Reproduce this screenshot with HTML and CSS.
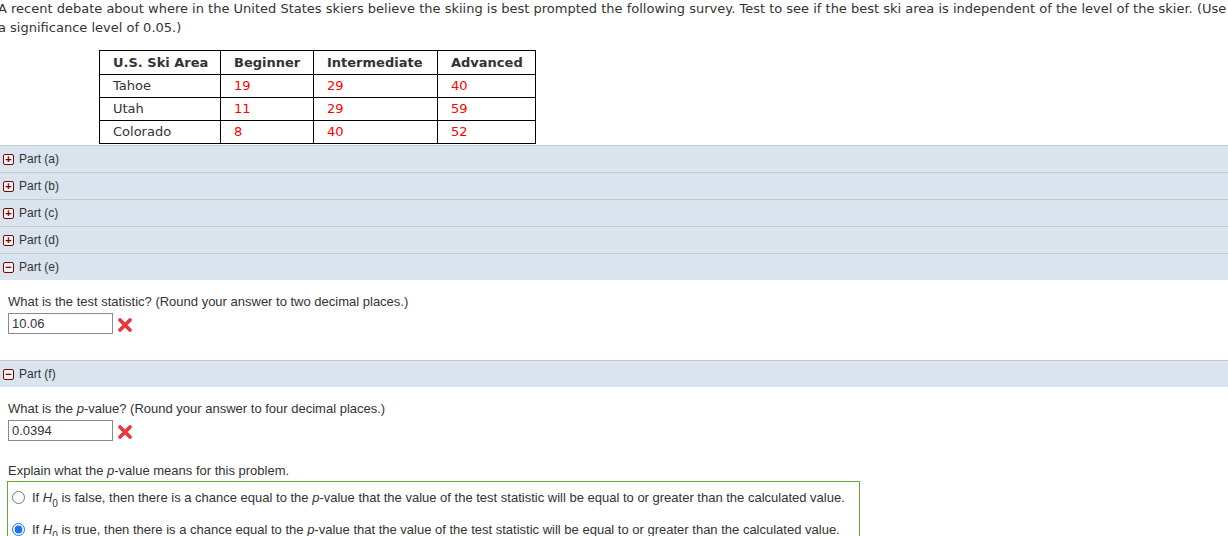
FILE: index.html
```html
<!DOCTYPE html>
<html lang="en">
<head>
    <meta charset="UTF-8">
    <title>Ski Area Survey</title>
    <link rel="stylesheet" href="styles.css">
</head>
<body>
    <div class="page">
        <p class="intro">A recent debate about where in the United States skiers believe the skiing is best prompted the following survey. Test to see if the best ski area is independent of the level of the skier. (Use a significance level of 0.05.)</p>

        <table class="survey">
            <tr>
                <th class="c1">U.S. Ski Area</th>
                <th class="c2">Beginner</th>
                <th class="c3">Intermediate</th>
                <th class="c4">Advanced</th>
            </tr>
            <tr>
                <td>Tahoe</td>
                <td class="num">19</td>
                <td class="num">29</td>
                <td class="num">40</td>
            </tr>
            <tr>
                <td>Utah</td>
                <td class="num">11</td>
                <td class="num">29</td>
                <td class="num">59</td>
            </tr>
            <tr>
                <td>Colorado</td>
                <td class="num">8</td>
                <td class="num">40</td>
                <td class="num">52</td>
            </tr>
        </table>

        <div class="part"><span class="toggle">+</span>Part (a)</div>
        <div class="part"><span class="toggle">+</span>Part (b)</div>
        <div class="part"><span class="toggle">+</span>Part (c)</div>
        <div class="part"><span class="toggle">+</span>Part (d)</div>
        <div class="part"><span class="toggle minus">&minus;</span>Part (e)</div>

        <div class="part-body">
            <p class="question">What is the test statistic? (Round your answer to two decimal places.)</p>
            <div class="answer">
                <input type="text" class="answer-input" value="10.06">
                <svg class="wrong" width="16" height="16" viewBox="0 0 16 16">
                    <path d="M3 3 L13 13 M13 3 L3 13" stroke="#e8383d" stroke-width="3.8" stroke-linecap="round"/>
                </svg>
            </div>
        </div>

        <div class="part"><span class="toggle minus">&minus;</span>Part (f)</div>

        <div class="part-body last">
            <p class="question">What is the <i>p</i>-value? (Round your answer to four decimal places.)</p>
            <div class="answer">
                <input type="text" class="answer-input" value="0.0394">
                <svg class="wrong" width="16" height="16" viewBox="0 0 16 16">
                    <path d="M3 3 L13 13 M13 3 L3 13" stroke="#e8383d" stroke-width="3.8" stroke-linecap="round"/>
                </svg>
            </div>

            <p class="explain">Explain what the <i>p</i>-value means for this problem.</p>
            <div class="choices">
                <label class="choice">
                    <input type="radio" name="pval">
                    <span>If <i>H</i><sub>0</sub> is false, then there is a chance equal to the <i>p</i>-value that the value of the test statistic will be equal to or greater than the calculated value.</span>
                </label>
                <label class="choice">
                    <input type="radio" name="pval" checked>
                    <span>If <i>H</i><sub>0</sub> is true, then there is a chance equal to the <i>p</i>-value that the value of the test statistic will be equal to or greater than the calculated value.</span>
                </label>
            </div>
        </div>
    </div>
</body>
</html>
```

FILE: styles.css
```css
/* General Reset */
* {
    margin: 0;
    padding: 0;
    box-sizing: border-box;
}

html, body {
    overflow: hidden;
}

body {
    background-color: #ffffff;
    color: #333333;
    font-family: "Liberation Sans", Arial, sans-serif;
}

.page {
    width: 1240px;
}

.intro {
    font-family: "DejaVu Sans", Verdana, sans-serif;
    font-size: 13px;
    line-height: 19px;
    width: 1232px;
    margin: -1px 0 0 -2px;
    color: #333333;
}

/* Survey table */
.survey {
    border-collapse: collapse;
    margin: 13px 0 1px 99px;
    font-family: "DejaVu Sans", Verdana, sans-serif;
    font-size: 13px;
}

.survey th,
.survey td {
    border: 1px solid #000000;
    line-height: 22px;
    padding: 0 0 0 13px;
    text-align: left;
    white-space: nowrap;
}

.survey th {
    font-weight: bold;
    line-height: 23px;
    color: #333333;
}

.survey td {
    color: #333333;
}

.survey td.num {
    color: #ff0000;
}

.c1 { width: 121px; }
.c2 { width: 93px; }
.c3 { width: 124px; }
.c4 { width: 98px; }

/* Collapsible parts */
.part {
    display: flex;
    align-items: center;
    height: 27px;
    background-color: #d9e4ee;
    border-top: 1px solid #c6c9cc;
    font-size: 12px;
    color: #333333;
    width: 1228px;
}

.toggle {
    display: inline-flex;
    align-items: center;
    justify-content: center;
    width: 11px;
    height: 11px;
    margin: 0 5px 0 3px;
    border: 1.5px solid #800000;
    border-radius: 2px;
    color: #800000;
    font-size: 11px;
    font-weight: bold;
    line-height: 1;
    background-color: #f4f4f6;
}

.part-body {
    padding: 14px 0 26px 8px;
}

.part-body.last {
    padding-bottom: 0;
}

.question {
    font-size: 13px;
    line-height: 16px;
    margin-bottom: 3px;
}

.answer {
    display: flex;
    align-items: center;
    gap: 4px;
}

.answer-input {
    width: 105px;
    height: 21px;
    border: 1px solid #8a8a8a;
    padding: 0 3px;
    font-family: "Liberation Sans", Arial, sans-serif;
    font-size: 13px;
    color: #333344;
}

.wrong {
    margin-top: 2px;
}

.explain {
    font-size: 13px;
    line-height: 16px;
    margin: 22px 0 2px;
}

.choices {
    width: 853px;
    margin-left: -1px;
    border: 1px solid #6aa536;
    padding: 7px 0 0 4px;
}

.choice {
    display: flex;
    align-items: center;
    gap: 6px;
    height: 32px;
    font-size: 13px;
    margin-top: -8px;
}

.choice:first-child {
    margin-top: 0;
    height: 16px;
    margin-bottom: 16px;
}

.choice input {
    width: 13px;
    height: 13px;
    margin: 0 1px 0 0;
    accent-color: #1a73e8;
}

sub {
    font-size: 10px;
    vertical-align: -5px;
    line-height: 0;
}
```
